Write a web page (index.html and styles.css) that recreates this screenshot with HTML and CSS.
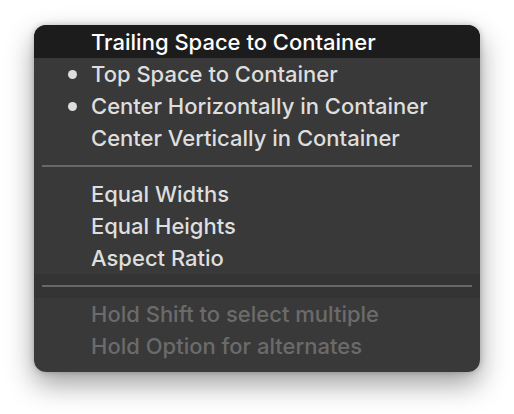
FILE: index.html
```html
<!DOCTYPE html>
<html>
<head>
<meta charset="utf-8">
<link rel="stylesheet" href="styles.css">
</head>
<body>
<div class="shadow">
<div class="menu">
  <div class="item selected"><span class="mark"></span><span class="label">Trailing Space to Container</span></div>
  <div class="item"><span class="mark"><span class="dot"></span></span><span class="label">Top Space to Container</span></div>
  <div class="item"><span class="mark"><span class="dot"></span></span><span class="label">Center Horizontally in Container</span></div>
  <div class="item"><span class="mark"></span><span class="label">Center Vertically in Container</span></div>
  <div class="sep"><div class="line"></div></div>
  <div class="item"><span class="mark"></span><span class="label">Equal Widths</span></div>
  <div class="item"><span class="mark"></span><span class="label">Equal Heights</span></div>
  <div class="item"><span class="mark"></span><span class="label">Aspect Ratio</span></div>
  <div class="sep dark"><div class="line"></div></div>
  <div class="item disabled"><span class="mark"></span><span class="label">Hold Shift to select multiple</span></div>
  <div class="item disabled"><span class="mark"></span><span class="label">Hold Option for alternates</span></div>
</div>
</div>
</body>
</html>
```
FILE: styles.css
```css
html, body {
  margin: 0;
  padding: 0;
  background: #ffffff;
}
body {
  padding: 25px 0 40px 34px;
  font-family: "Inter", "Liberation Sans", sans-serif;
}
.shadow {
  width: 446px;
  border-radius: 12px;
  box-shadow: 0 12px 28px rgba(0, 0, 0, 0.38), 0 0 6px rgba(0, 0, 0, 0.22);
}
.menu {
  background: #393939;
  border-radius: 12px;
  overflow: hidden;
  padding-bottom: 10px;
}
.item {
  height: 32px;
  display: flex;
  align-items: center;
  color: #dedede;
  font-size: 22px;
  font-weight: 500;
}
.item.selected {
  background: #1c1c1c;
  color: #ffffff;
  height: 33px;
}
.item.disabled {
  color: #6b6b6b;
}
.mark {
  width: 57px;
  display: flex;
  justify-content: flex-end;
  padding-right: 14px;
  box-sizing: border-box;
}
.dot {
  width: 9px;
  height: 9px;
  border-radius: 50%;
  background: #dddddd;
}
.sep {
  height: 24px;
  display: flex;
  align-items: center;
  padding: 0 8px;
}
.sep.dark {
  background: #343434;
}
.line {
  flex: 1;
  height: 2px;
  background: #686868;
}
```
